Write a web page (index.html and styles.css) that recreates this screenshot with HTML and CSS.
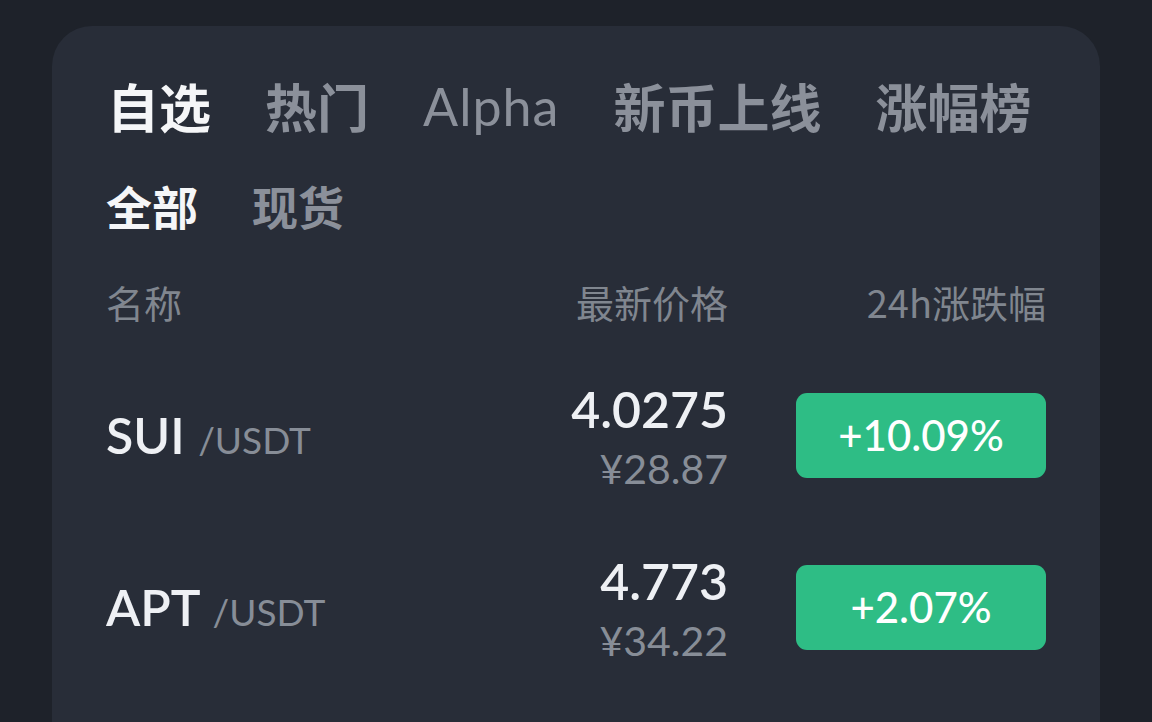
FILE: index.html
```html
<!DOCTYPE html>
<html lang="zh-CN">

<head>
    <meta charset="UTF-8">
    <meta name="viewport" content="width=device-width, initial-scale=1.0">
    <title>行情 - 自选</title>
    <link rel="stylesheet" href="styles.css">
</head>

<body>

    <section class="market-card">
        <nav class="main-tabs">
            <span class="tab active">自选</span>
            <span class="tab">热门</span>
            <span class="tab latin">Alpha</span>
            <span class="tab">新币上线</span>
            <span class="tab">涨幅榜</span>
        </nav>

        <div class="sub-tabs">
            <span class="sub-tab active">全部</span>
            <span class="sub-tab">现货</span>
        </div>

        <div class="list-head">
            <span>名称</span>
            <span class="right">最新价格</span>
            <span class="right">24h涨跌幅</span>
        </div>

        <div class="coin-list">
            <div class="coin-row">
                <div class="pair">SUI <span class="quote">/USDT</span></div>
                <div class="price">
                    <div class="last">4.0275</div>
                    <div class="cny">¥28.87</div>
                </div>
                <div class="change up">+10.09%</div>
            </div>

            <div class="coin-row">
                <div class="pair">APT <span class="quote">/USDT</span></div>
                <div class="price">
                    <div class="last">4.773</div>
                    <div class="cny">¥34.22</div>
                </div>
                <div class="change up">+2.07%</div>
            </div>
        </div>
    </section>

</body>

</html>
```

FILE: styles.css
```css
body, html {
    margin: 0;
    padding: 0;
    height: 100%;
    background: #1e222a;
    font-family: Lato, "Noto Sans CJK SC", sans-serif;
    color: #eef0f4;
    overflow: hidden;
}

.market-card {
    margin: 26px 52px 0;
    min-height: 720px;
    padding: 54px 54px 0;
    background: #282d38;
    border-radius: 40px 40px 0 0;
}

.main-tabs {
    display: flex;
    gap: 54px;
    padding-left: 1px;
}

.tab {
    font-family: "Noto Sans CJK SC", sans-serif;
    font-size: 52px;
    line-height: 52px;
    font-weight: 700;
    color: #8b909a;
}

.tab.latin {
    font-family: Lato, sans-serif;
    font-weight: 400;
    font-size: 52px;
    letter-spacing: 1px;
}

.tab.active {
    color: #f5f6f8;
}

.sub-tabs {
    display: flex;
    gap: 54px;
    margin-top: 50px;
}

.sub-tab {
    font-family: "Noto Sans CJK SC", sans-serif;
    font-size: 46px;
    line-height: 46px;
    font-weight: 700;
    color: #8b909a;
}

.sub-tab.active {
    color: #f5f6f8;
}

.list-head,
.coin-row {
    display: grid;
    grid-template-columns: 1fr auto 250px;
    column-gap: 68px;
    align-items: center;
}

.list-head {
    margin-top: 55px;
    font-family: "Noto Sans CJK SC", sans-serif;
    font-size: 38px;
    line-height: 38px;
    color: #80868f;
}

.right {
    text-align: right;
}

.coin-list {
    padding-top: 28px;
}

.coin-row {
    height: 172px;
}

.pair {
    font-size: 50px;
    font-weight: 600;
    color: #eef0f4;
}

.quote {
    font-size: 37px;
    font-weight: 400;
    color: #878d97;
    margin-left: 1px;
}

.price {
    text-align: right;
    padding-top: 10px;
}

.price .last {
    font-size: 50px;
    line-height: 58px;
    font-weight: 600;
    color: #eef0f4;
}

.price .cny {
    font-size: 41px;
    line-height: 62px;
    color: #878d97;
}

.change {
    height: 85px;
    border-radius: 11px;
    display: flex;
    align-items: center;
    justify-content: center;
    font-size: 42px;
    font-weight: 500;
    color: #fff;
}

.change.up {
    background: #2ebd85;
}
```
